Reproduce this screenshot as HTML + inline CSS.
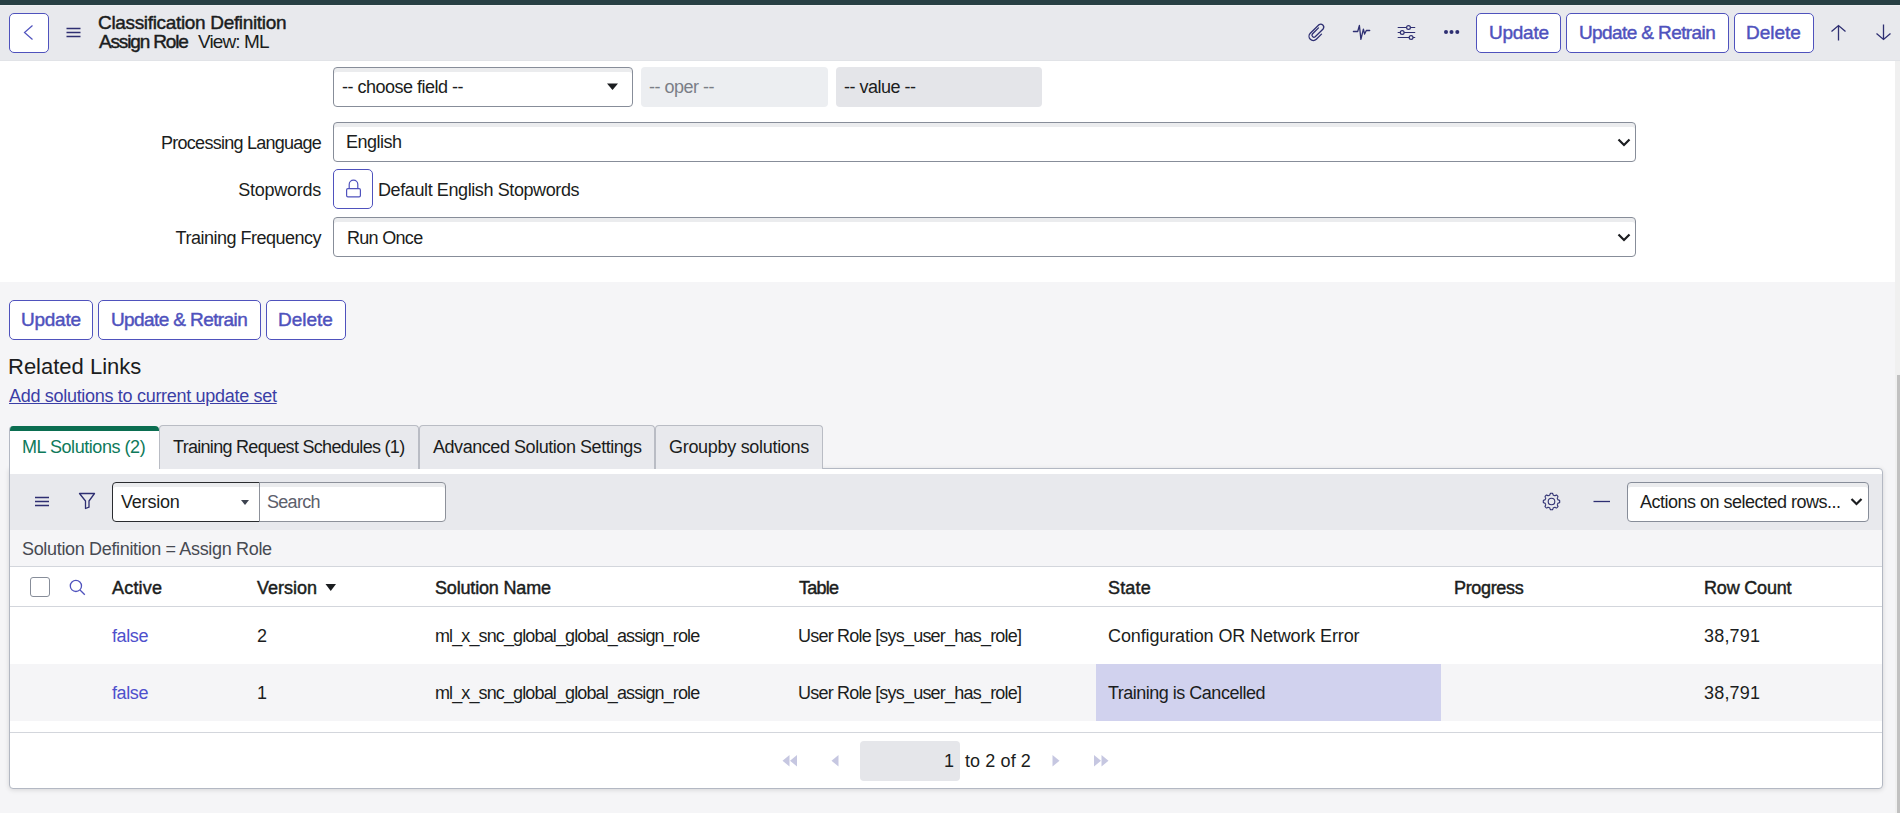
<!DOCTYPE html>
<html><head><meta charset="utf-8">
<style>
*{box-sizing:border-box}
html,body{margin:0;padding:0}
body{width:1900px;height:813px;overflow:hidden;position:relative;background:#f5f5f7;font-family:"Liberation Sans",sans-serif;color:#1b1d20}
.a{position:absolute;white-space:nowrap}
.r{font-size:18px;line-height:20px;letter-spacing:-0.5px}
.b{font-size:18px;line-height:20px;-webkit-text-stroke-width:0.45px;letter-spacing:0px}
.topbar{left:0;top:0;width:1900px;height:5px;background:#284044}
.hdr{left:0;top:5px;width:1900px;height:56px;background:#e8e9ed;border-top:1px solid #eeeff2;border-bottom:1px solid #e1e3e7}
.form{left:0;top:61px;width:1895px;height:221px;background:#fff}
.btn{position:absolute;height:40px;border:1px solid #4f52bd;border-radius:5px;background:#fff}
.bt{position:absolute;font-size:19px;line-height:20px;-webkit-text-stroke-width:0.45px;color:#4f52bd;letter-spacing:-0.6px;white-space:nowrap}
.sel{position:absolute;height:40px;border:1px solid #878d99;border-radius:4px;background:#fff;box-shadow:inset 0 4px 0 #ebecee}
.lbl{text-align:right}
.scroll{left:1895px;top:61px;width:5px;height:752px;background:#f0f0f0}
.thumb{left:1897px;top:375px;width:3px;height:438px;background:#c1c1c1}
.tab{position:absolute;top:425px;height:44px;background:#e8e9ed;border:1px solid #b9bcc4;border-bottom:none;border-radius:4px 4px 0 0}
.hl{left:0;width:1900px;height:1px;background:#d3d6dc}
</style></head>
<body>
<div class="a topbar"></div>
<div class="a hdr"></div>
<!-- back button -->
<div class="a" style="left:9px;top:13px;width:40px;height:40px;border:1px solid #4f52bd;border-radius:5px;background:#fff"></div>
<svg class="a" style="left:0;top:0" width="120" height="60"><path d="M32.5 25.5 L24.5 32.5 L32.5 39.5" fill="none" stroke="#4f52bd" stroke-width="1.2"/>
<path d="M66.5 28.5H80.5M66.5 32.5H80.5M66.5 36.5H80.5" stroke="#2e2f72" stroke-width="1.3"/></svg>
<div class="a" style="left:98px;top:13px;font-size:19px;line-height:20px;-webkit-text-stroke-width:0.45px;letter-spacing:-0.33px">Classification Definition</div>
<div class="a" style="left:99px;top:32px;font-size:19px;line-height:20px;-webkit-text-stroke-width:0.45px;letter-spacing:-1.15px">Assign Role</div>
<div class="a" style="left:198px;top:32px;font-size:19px;line-height:20px;letter-spacing:-0.9px">View: ML</div>

<!-- header icons -->
<svg class="a" style="left:1290px;top:10px" width="180" height="45" fill="none" stroke="#2e2f72" stroke-width="1.3">
<path d="M31.5 24.1 L26.3 29.3 A4.2 4.2 0 0 1 20.3 23.3 L28.9 14.8 A3 3 0 0 1 33.1 19 L25.2 26.8 A2 2 0 0 1 22.4 24 L28.5 17.9" stroke-linecap="round"/>
<path d="M63.4 21.5 H67.7 L69.4 15.5 L70.9 29.4 L73.4 19.2 L74.6 24 L76.3 20.5 H79.7" stroke-linejoin="round" stroke-linecap="round"/>
<path d="M107.7 17.5H125.2M107.7 22.5H125.2M107.7 27.5H125.2" stroke-width="1.2"/>
<circle cx="118.5" cy="17.5" r="1.9" fill="#e8e9ed" stroke-width="1.2"/><circle cx="112.2" cy="22.5" r="1.9" fill="#e8e9ed" stroke-width="1.2"/><circle cx="121.1" cy="27.5" r="1.9" fill="#e8e9ed" stroke-width="1.2"/>
<circle cx="156" cy="22" r="2" fill="#2e2f72" stroke="none"/><circle cx="161.5" cy="22" r="2" fill="#2e2f72" stroke="none"/><circle cx="167.3" cy="22" r="2" fill="#2e2f72" stroke="none"/>
</svg>

<!-- header buttons -->
<div class="btn" style="left:1476px;top:13px;width:85px"></div>
<div class="bt" style="left:1489px;top:23px;letter-spacing:-0.25px">Update</div>
<div class="btn" style="left:1566px;top:13px;width:163px"></div>
<div class="bt" style="left:1579px;top:23px">Update &amp; Retrain</div>
<div class="btn" style="left:1734px;top:13px;width:80px"></div>
<div class="bt" style="left:1746px;top:23px;letter-spacing:0px">Delete</div>
<svg class="a" style="left:1820px;top:15px" width="80" height="35" fill="none" stroke="#2e2f72" stroke-width="1.3">
<path d="M18.5 25.5V10.5M11.5 16.5L18.5 10.5L25.5 16.5"/>
<path d="M63.5 9.5V24.5M56.5 18.5L63.5 24.5L70.5 18.5"/>
</svg>

<div class="a form"></div>

<!-- condition row -->
<div class="sel" style="left:333px;top:67px;width:300px"></div>
<div class="a r" style="left:342px;top:77px">-- choose field --</div>
<svg class="a" style="left:600px;top:80px" width="25" height="15"><path d="M7 3.5H18L12.5 10Z" fill="#1b1d20"/></svg>
<div class="a" style="left:641px;top:67px;width:187px;height:40px;background:#eceef1;border-radius:4px"></div>
<div class="a r" style="left:649px;top:77px;color:#7a7e87">-- oper --</div>
<div class="a" style="left:836px;top:67px;width:206px;height:40px;background:#e4e5e9;border-radius:4px"></div>
<div class="a r" style="left:844px;top:77px">-- value --</div>

<div class="a r lbl" style="right:1579px;top:133px;letter-spacing:-0.75px">Processing Language</div>
<div class="sel" style="left:333px;top:122px;width:1303px"></div>
<div class="a r" style="left:346px;top:132px">English</div>
<svg class="a" style="left:1610px;top:130px" width="25" height="25"><path d="M8.5 9.5L14 15L19.5 9.5" fill="none" stroke="#1b1d20" stroke-width="2.2"/></svg>

<div class="a r lbl" style="right:1579px;top:180px;letter-spacing:-0.25px">Stopwords</div>
<div class="a" style="left:333px;top:169px;width:40px;height:40px;border:1px solid #4f52bd;border-radius:5px;background:#fff"></div>
<svg class="a" style="left:333px;top:169px" width="40" height="40" fill="none" stroke="#4f52bd" stroke-width="1.2"><rect x="13.6" y="19.6" width="13.8" height="8.3" rx="1.3"/><path d="M16.2 19.6V15.5a4.3 4.3 0 0 1 8.6 0V19.6"/></svg>
<div class="a r" style="left:378px;top:180px;letter-spacing:-0.4px">Default English Stopwords</div>

<div class="a r lbl" style="right:1579px;top:228px">Training Frequency</div>
<div class="sel" style="left:333px;top:217px;width:1303px"></div>
<div class="a r" style="left:347px;top:228px;letter-spacing:-0.7px">Run Once</div>
<svg class="a" style="left:1610px;top:225px" width="25" height="25"><path d="M8.5 9.5L14 15L19.5 9.5" fill="none" stroke="#1b1d20" stroke-width="2.2"/></svg>

<!-- bottom buttons -->
<div class="btn" style="left:9px;top:300px;width:84px"></div>
<div class="bt" style="left:21px;top:310px;letter-spacing:-0.25px">Update</div>
<div class="btn" style="left:98px;top:300px;width:163px"></div>
<div class="bt" style="left:111px;top:310px">Update &amp; Retrain</div>
<div class="btn" style="left:266px;top:300px;width:80px"></div>
<div class="bt" style="left:278px;top:310px;letter-spacing:0px">Delete</div>

<div class="a" style="left:8px;top:355px;font-size:22px;line-height:24px;letter-spacing:0px">Related Links</div>
<div class="a r" style="left:9px;top:386px;color:#3b3ea6;text-decoration:underline;letter-spacing:-0.3px">Add solutions to current update set</div>

<!-- tabs -->
<div class="a" style="left:9px;top:468px;width:1874px;height:321px;background:#fff;border:1px solid #b3b8c3;border-radius:0 4px 4px 4px;box-shadow:0 1px 5px rgba(0,0,0,0.13)"></div>
<div class="a" style="left:9px;top:426px;width:150px;height:44px;background:#fff;border-left:1px solid #b3b8c3;border-radius:4px 4px 0 0;overflow:hidden"><div style="height:5px;background:#0b6e51"></div></div>
<div class="a r" style="left:22px;top:437px;color:#0e7a5b;letter-spacing:-0.45px">ML Solutions (2)</div>
<div class="tab" style="left:159px;width:260px"></div>
<div class="a r" style="left:173px;top:437px;letter-spacing:-0.7px">Training Request Schedules (1)</div>
<div class="tab" style="left:419px;width:236px"></div>
<div class="a r" style="left:433px;top:437px;letter-spacing:-0.45px">Advanced Solution Settings</div>
<div class="tab" style="left:655px;width:168px"></div>
<div class="a r" style="left:669px;top:437px;letter-spacing:-0.3px">Groupby solutions</div>

<!-- toolbar -->
<div class="a" style="left:10px;top:474px;width:1872px;height:56px;background:#e8e9ed"></div>
<svg class="a" style="left:20px;top:485px" width="90" height="35" fill="none" stroke="#2e2f72" stroke-width="1.3">
<path d="M15 12.5H29M15 16.5H29M15 20.5H29"/>
<path d="M59.5 8.5H74.5L69 16V22.2L65.5 23.5V16Z" stroke-linejoin="round"/>
</svg>
<div class="a" style="left:112px;top:482px;width:148px;height:40px;background:#fff;border:1.5px solid #2a2c30;border-radius:4px 0 0 4px;box-shadow:inset 0 4px 0 #ebecee"></div>
<div class="a r" style="left:121px;top:492px;letter-spacing:-0.2px">Version</div>
<svg class="a" style="left:235px;top:495px" width="20" height="15"><path d="M6 5H14L10 10Z" fill="#3d4350"/></svg>
<div class="a" style="left:259px;top:482px;width:187px;height:40px;background:#fff;border:1px solid #8d919a;border-left:1px solid #8d919a;border-radius:0 4px 4px 0;box-shadow:inset 0 4px 0 #ebecee"></div>
<div class="a r" style="left:267px;top:492px;color:#5c606b;letter-spacing:-0.7px">Search</div>

<svg class="a" style="left:1535px;top:485px" width="80" height="35" fill="none" stroke="#2e2f72" stroke-width="1.3">
<circle cx="16.5" cy="16.5" r="3.3" stroke-width="1.1"/>
<path d="M16.50 8.30 L16.71 8.30 L16.93 8.31 L17.14 8.33 L17.36 8.34 L17.57 8.37 L17.74 8.65 L17.88 9.04 L18.00 9.44 L18.10 9.83 L18.21 10.12 L18.37 10.17 L18.54 10.22 L18.70 10.28 L18.87 10.34 L19.03 10.40 L19.18 10.47 L19.34 10.54 L19.50 10.62 L19.65 10.70 L19.80 10.78 L20.08 10.65 L20.43 10.45 L20.80 10.25 L21.17 10.07 L21.49 9.99 L21.66 10.13 L21.83 10.26 L21.99 10.41 L22.14 10.55 L22.30 10.70 L22.45 10.86 L22.59 11.01 L22.74 11.17 L22.87 11.34 L23.01 11.51 L22.93 11.83 L22.75 12.20 L22.55 12.57 L22.35 12.92 L22.22 13.20 L22.30 13.35 L22.38 13.50 L22.46 13.66 L22.53 13.82 L22.60 13.97 L22.66 14.13 L22.72 14.30 L22.78 14.46 L22.83 14.63 L22.88 14.79 L23.17 14.90 L23.56 15.00 L23.96 15.12 L24.35 15.26 L24.63 15.43 L24.66 15.64 L24.67 15.86 L24.69 16.07 L24.70 16.29 L24.70 16.50 L24.70 16.71 L24.69 16.93 L24.67 17.14 L24.66 17.36 L24.63 17.57 L24.35 17.74 L23.96 17.88 L23.56 18.00 L23.17 18.10 L22.88 18.21 L22.83 18.37 L22.78 18.54 L22.72 18.70 L22.66 18.87 L22.60 19.03 L22.53 19.18 L22.46 19.34 L22.38 19.50 L22.30 19.65 L22.22 19.80 L22.35 20.08 L22.55 20.43 L22.75 20.80 L22.93 21.17 L23.01 21.49 L22.87 21.66 L22.74 21.83 L22.59 21.99 L22.45 22.14 L22.30 22.30 L22.14 22.45 L21.99 22.59 L21.83 22.74 L21.66 22.87 L21.49 23.01 L21.17 22.93 L20.80 22.75 L20.43 22.55 L20.08 22.35 L19.80 22.22 L19.65 22.30 L19.50 22.38 L19.34 22.46 L19.18 22.53 L19.03 22.60 L18.87 22.66 L18.70 22.72 L18.54 22.78 L18.37 22.83 L18.21 22.88 L18.10 23.17 L18.00 23.56 L17.88 23.96 L17.74 24.35 L17.57 24.63 L17.36 24.66 L17.14 24.67 L16.93 24.69 L16.71 24.70 L16.50 24.70 L16.29 24.70 L16.07 24.69 L15.86 24.67 L15.64 24.66 L15.43 24.63 L15.26 24.35 L15.12 23.96 L15.00 23.56 L14.90 23.17 L14.79 22.88 L14.63 22.83 L14.46 22.78 L14.30 22.72 L14.13 22.66 L13.97 22.60 L13.82 22.53 L13.66 22.46 L13.50 22.38 L13.35 22.30 L13.20 22.22 L12.92 22.35 L12.57 22.55 L12.20 22.75 L11.83 22.93 L11.51 23.01 L11.34 22.87 L11.17 22.74 L11.01 22.59 L10.86 22.45 L10.70 22.30 L10.55 22.14 L10.41 21.99 L10.26 21.83 L10.13 21.66 L9.99 21.49 L10.07 21.17 L10.25 20.80 L10.45 20.43 L10.65 20.08 L10.78 19.80 L10.70 19.65 L10.62 19.50 L10.54 19.34 L10.47 19.18 L10.40 19.03 L10.34 18.87 L10.28 18.70 L10.22 18.54 L10.17 18.37 L10.12 18.21 L9.83 18.10 L9.44 18.00 L9.04 17.88 L8.65 17.74 L8.37 17.57 L8.34 17.36 L8.33 17.14 L8.31 16.93 L8.30 16.71 L8.30 16.50 L8.30 16.29 L8.31 16.07 L8.33 15.86 L8.34 15.64 L8.37 15.43 L8.65 15.26 L9.04 15.12 L9.44 15.00 L9.83 14.90 L10.12 14.79 L10.17 14.63 L10.22 14.46 L10.28 14.30 L10.34 14.13 L10.40 13.97 L10.47 13.82 L10.54 13.66 L10.62 13.50 L10.70 13.35 L10.78 13.20 L10.65 12.92 L10.45 12.57 L10.25 12.20 L10.07 11.83 L9.99 11.51 L10.13 11.34 L10.26 11.17 L10.41 11.01 L10.55 10.86 L10.70 10.70 L10.86 10.55 L11.01 10.41 L11.17 10.26 L11.34 10.13 L11.51 9.99 L11.83 10.07 L12.20 10.25 L12.57 10.45 L12.92 10.65 L13.20 10.78 L13.35 10.70 L13.50 10.62 L13.66 10.54 L13.82 10.47 L13.97 10.40 L14.13 10.34 L14.30 10.28 L14.46 10.22 L14.63 10.17 L14.79 10.12 L14.90 9.83 L15.00 9.44 L15.12 9.04 L15.26 8.65 L15.43 8.37 L15.64 8.34 L15.86 8.33 L16.07 8.31 L16.29 8.30Z" stroke-linejoin="round" stroke-width="1.1"/>
<path d="M58.5 16.5H75"/>
</svg>
<div class="sel" style="left:1627px;top:482px;width:242px"></div>
<div class="a r" style="left:1640px;top:492px;letter-spacing:-0.5px">Actions on selected rows...</div>
<svg class="a" style="left:1845px;top:490px" width="25" height="25"><path d="M6.5 9L11.5 14L16.5 9" fill="none" stroke="#1b1d20" stroke-width="2.2"/></svg>

<!-- breadcrumb -->
<div class="a" style="left:10px;top:530px;width:1872px;height:37px;background:#f5f5f7;border-bottom:1px solid #d3d6dc"></div>
<div class="a r" style="left:22px;top:539px;color:#474a52;letter-spacing:-0.33px">Solution Definition = Assign Role</div>

<!-- header row -->
<div class="a" style="left:10px;top:606px;width:1872px;height:1px;background:#d3d6dc"></div>
<div class="a" style="left:30px;top:577px;width:20px;height:20px;border:1.5px solid #878d99;border-radius:3px;background:#fff"></div>
<svg class="a" style="left:60px;top:575px" width="30" height="25" fill="none" stroke="#4f52bd" stroke-width="1.3"><circle cx="15.9" cy="10.9" r="5.6"/><path d="M20 15L24.8 19.8"/></svg>
<div class="a b" style="left:112px;top:578px;letter-spacing:0.2px">Active</div>
<div class="a b" style="left:257px;top:578px">Version</div>
<svg class="a" style="left:320px;top:580px" width="20" height="15"><path d="M5.5 4H16L10.75 11Z" fill="#1b1d20"/></svg>
<div class="a b" style="left:435px;top:578px;letter-spacing:-0.17px">Solution Name</div>
<div class="a b" style="left:799px;top:578px;letter-spacing:-0.75px">Table</div>
<div class="a b" style="left:1108px;top:578px;letter-spacing:0.18px">State</div>
<div class="a b" style="left:1454px;top:578px;letter-spacing:-0.33px">Progress</div>
<div class="a b" style="left:1704px;top:578px;letter-spacing:-0.19px">Row Count</div>

<!-- rows -->
<div class="a" style="left:10px;top:664px;width:1872px;height:57px;background:#f5f5f7"></div>
<div class="a" style="left:1096px;top:664px;width:345px;height:57px;background:#d1d2ee"></div>

<div class="a r" style="left:112px;top:626px;color:#4e50cc;letter-spacing:-0.4px">false</div>
<div class="a r" style="left:257px;top:626px">2</div>
<div class="a r" style="left:435px;top:626px;letter-spacing:-0.88px">ml_x_snc_global_global_assign_role</div>
<div class="a r" style="left:798px;top:626px;letter-spacing:-0.79px">User Role [sys_user_has_role]</div>
<div class="a r" style="left:1108px;top:626px;letter-spacing:-0.12px">Configuration OR Network Error</div>
<div class="a r" style="left:1704px;top:626px;letter-spacing:0.2px">38,791</div>

<div class="a r" style="left:112px;top:683px;color:#4e50cc;letter-spacing:-0.4px">false</div>
<div class="a r" style="left:257px;top:683px">1</div>
<div class="a r" style="left:435px;top:683px;letter-spacing:-0.88px">ml_x_snc_global_global_assign_role</div>
<div class="a r" style="left:798px;top:683px;letter-spacing:-0.79px">User Role [sys_user_has_role]</div>
<div class="a r" style="left:1108px;top:683px;letter-spacing:-0.5px">Training is Cancelled</div>
<div class="a r" style="left:1704px;top:683px;letter-spacing:0.2px">38,791</div>

<!-- pagination -->
<div class="a" style="left:10px;top:732px;width:1872px;height:1px;background:#d3d6dc"></div>
<svg class="a" style="left:770px;top:745px" width="350" height="30" fill="#c6c7e1">
<path d="M19.5 10V21.5L12.5 15.75Z M27 10V21.5L20 15.75Z"/>
<path d="M68.5 10V21.5L61.5 15.75Z"/>
<path d="M282.5 10V21.5L289.5 15.75Z"/>
<path d="M324 10V21.5L331 15.75Z M331.5 10V21.5L338.5 15.75Z"/>
</svg>
<div class="a" style="left:860px;top:741px;width:100px;height:40px;background:#e5e6ea;border-radius:4px"></div>
<div class="a r" style="left:944px;top:751px">1</div>
<div class="a r" style="left:965px;top:751px;letter-spacing:0.1px">to 2 of 2</div>

<div class="a scroll"></div>
<div class="a thumb"></div>
</body></html>
